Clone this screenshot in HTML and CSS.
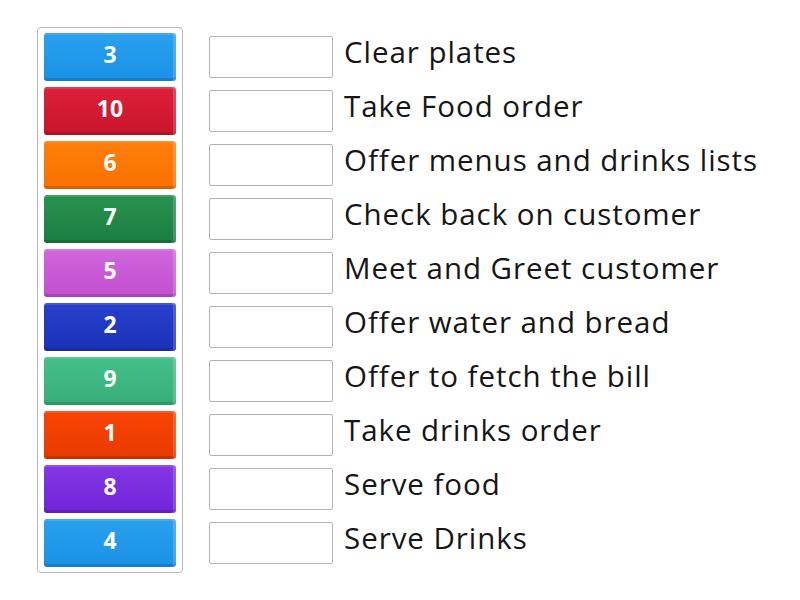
FILE: index.html
```html
<!DOCTYPE html>
<html>
<head>
<meta charset="utf-8">
<link rel="stylesheet" href="styles.css">
</head>
<body>
<div class="page">
  <div class="tiles">
    <div class="tile c-blue">3</div>
    <div class="tile c-red">10</div>
    <div class="tile c-orange">6</div>
    <div class="tile c-green">7</div>
    <div class="tile c-pink">5</div>
    <div class="tile c-navy">2</div>
    <div class="tile c-teal">9</div>
    <div class="tile c-fire">1</div>
    <div class="tile c-purple">8</div>
    <div class="tile c-blue">4</div>
  </div>
  <div class="rows">
    <div class="row"><div class="slot"></div><span class="label">Clear plates</span></div>
    <div class="row"><div class="slot"></div><span class="label">Take Food order</span></div>
    <div class="row"><div class="slot"></div><span class="label">Offer menus and drinks lists</span></div>
    <div class="row"><div class="slot"></div><span class="label">Check back on customer</span></div>
    <div class="row"><div class="slot"></div><span class="label">Meet and Greet customer</span></div>
    <div class="row"><div class="slot"></div><span class="label">Offer water and bread</span></div>
    <div class="row"><div class="slot"></div><span class="label">Offer to fetch the bill</span></div>
    <div class="row"><div class="slot"></div><span class="label">Take drinks order</span></div>
    <div class="row"><div class="slot"></div><span class="label">Serve food</span></div>
    <div class="row"><div class="slot"></div><span class="label">Serve Drinks</span></div>
  </div>
</div>
</body>
</html>
```
FILE: styles.css
```css
html, body {
  margin: 0;
  padding: 0;
  background: #fff;
  font-family: "Open Sans", "Liberation Sans", sans-serif;
}
.page {
  display: flex;
  align-items: flex-start;
  padding: 27px 0 0 37px;
}
.tiles {
  display: flex;
  flex-direction: column;
  gap: 6px;
  padding: 5px 6px;
  border: 1px solid #b9b9b9;
  border-radius: 4px;
}
.tile {
  width: 132px;
  height: 48px;
  padding-bottom: 6px;
  border-radius: 3px;
  color: #fff;
  font-weight: 700;
  font-size: 23px;
  display: flex;
  align-items: center;
  justify-content: center;
  box-sizing: border-box;
  box-shadow: inset -3px 0 0 rgba(255,255,255,0.18), inset 0 -3px 0 rgba(0,0,0,0.14), inset 0 2px 0 rgba(255,255,255,0.12);
}
.c-blue { background: linear-gradient(#2aa0ee, #1a91e6); }
.c-red { background: linear-gradient(#de2039, #c9142c); }
.c-orange { background: linear-gradient(#ff7f0c, #fa7100); }
.c-green { background: linear-gradient(#27934f, #1c7e42); }
.c-pink { background: linear-gradient(#d066dc, #c24fd0); }
.c-navy { background: linear-gradient(#2840cd, #1c31b8); }
.c-teal { background: linear-gradient(#45c08a, #36ae7a); }
.c-fire { background: linear-gradient(#f84406, #e83a00); }
.c-purple { background: linear-gradient(#8337e4, #7224d8); }
.rows {
  display: flex;
  flex-direction: column;
  margin-left: 26px;
  padding-top: 3px;
}
.row {
  height: 54px;
  display: flex;
  align-items: center;
}
.slot {
  width: 122px;
  height: 40px;
  border: 1px solid #b3b3b3;
  border-radius: 2px;
  background: #fff;
  flex: none;
}
.label {
  margin-left: 11px;
  margin-bottom: 11px;
  font-size: 29.5px;
  letter-spacing: 0.95px;
  color: #161616;
  white-space: nowrap;
}
```
